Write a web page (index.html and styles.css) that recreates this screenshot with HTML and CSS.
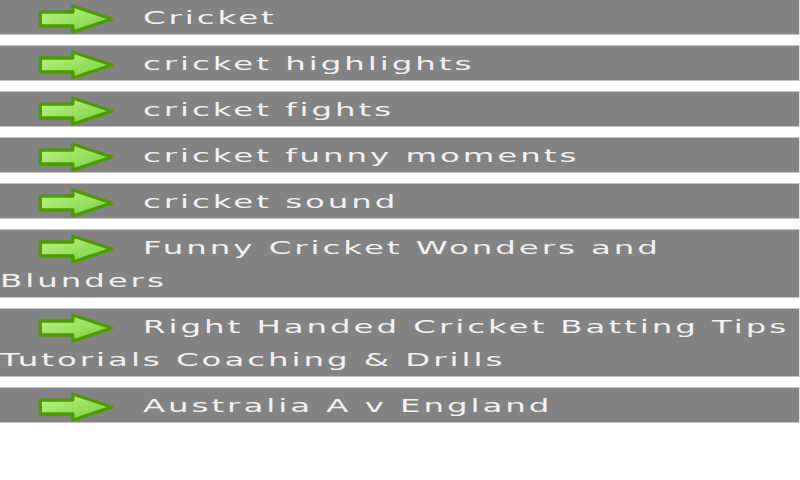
FILE: index.html
```html
<!DOCTYPE html>
<html>
<head>
<meta charset="utf-8">
<title>Cricket</title>
<link rel="stylesheet" href="styles.css">
</head>
<body>
<svg width="0" height="0" class="defs">
  <defs>
    <linearGradient id="g" x1="0" y1="0" x2="1" y2="1">
      <stop offset="0" stop-color="#c2f48c"/>
      <stop offset="1" stop-color="#72cf35"/>
    </linearGradient>
    <symbol id="arrow" viewBox="0 0 77 30" preserveAspectRatio="none">
      <path d="M2.5 8 H35 V2 L74 15 L35 28 V22 H2.5 Z" fill="url(#g)" stroke="#4c9b02" stroke-width="3.4" stroke-linejoin="round"/>
    </symbol>
  </defs>
</svg>
<ul class="list">
  <li class="item"><svg class="arrow"><use href="#arrow"/></svg>Cricket</li>
  <li class="item"><svg class="arrow"><use href="#arrow"/></svg>cricket highlights</li>
  <li class="item"><svg class="arrow"><use href="#arrow"/></svg>cricket fights</li>
  <li class="item"><svg class="arrow"><use href="#arrow"/></svg>cricket funny moments</li>
  <li class="item"><svg class="arrow"><use href="#arrow"/></svg>cricket sound</li>
  <li class="item"><svg class="arrow"><use href="#arrow"/></svg>Funny Cricket Wonders and Blunders</li>
  <li class="item"><svg class="arrow"><use href="#arrow"/></svg>Right Handed Cricket Batting Tips Tutorials Coaching &amp; Drills</li>
  <li class="item"><svg class="arrow"><use href="#arrow"/></svg>Australia A v England</li>
</ul>
</body>
</html>
```
FILE: styles.css
```css
html, body {
  margin: 0;
  padding: 0;
  background: #ffffff;
}

.defs {
  position: absolute;
  width: 0;
  height: 0;
}

.list {
  list-style: none;
  margin: -1px 0 0 0;
  padding: 0;
  width: 444.44px;
  transform: scaleX(1.8);
  transform-origin: 0 0;
}

.item {
  background: #838383;
  border-top: 1px solid #c6c6c6;
  border-bottom: 1px solid #c6c6c6;
  padding-top: 1px;
  margin: 0 0 10px 0;
  font-family: "DejaVu Sans", "Liberation Sans", sans-serif;
  font-size: 18px;
  line-height: 33px;
  letter-spacing: 1.65px;
  color: #f2f2f2;
}

.arrow {
  width: 42.78px;
  height: 30px;
  vertical-align: middle;
  margin: 0 15.56px 0 21.11px;
}
```
